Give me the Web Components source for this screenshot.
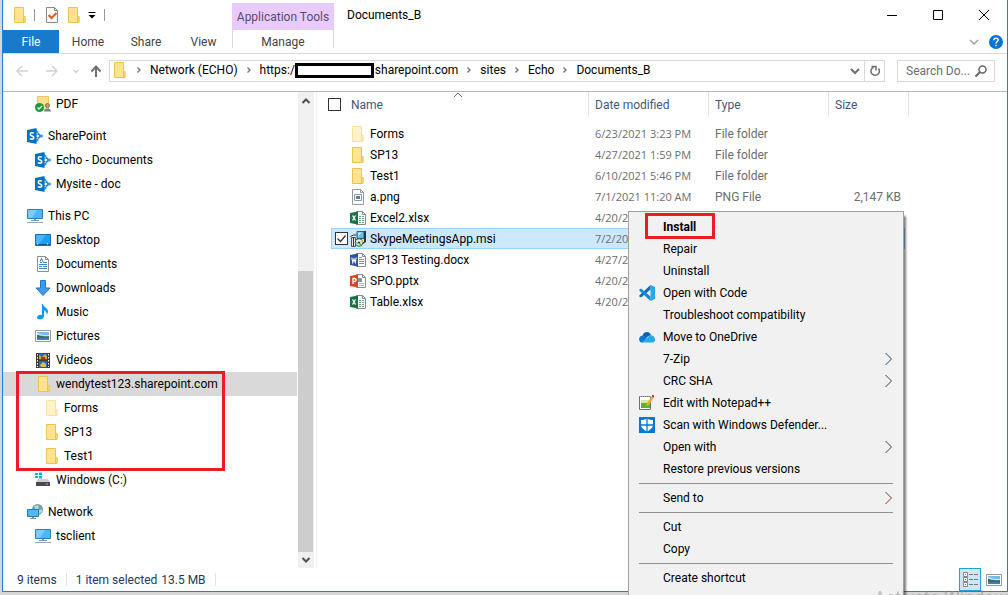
<!DOCTYPE html>
<html lang="en">
<head>
<meta charset="utf-8">
<title>Documents_B</title>
<style>
html, body { margin: 0; height: 100%; }
body { font: 12px/16px Roboto, "Open Sans", sans-serif; color: #000; background: #d6d6d6; overflow: hidden; }
</style>
</head>
<body>
<explorer-window></explorer-window>
<script>
const folder = (body, edge) => `<path d="M2.5.5h9v9h1.500v6h-10.500z" fill="${body}" stroke="${edge}"/><path d="M11.500 15V9.500h1.500V15z" fill="${body}" stroke="${edge}"/>`;
const office = (color, mark, detail) => `<path d="M6.500 1.500h6l3 3v10h-9z" fill="#fff" stroke="#8c8c8c"/><path d="M12.500 1.500v3h3" fill="none" stroke="#8c8c8c"/>${detail}<path d="M0 3l8-1.500v13L0 13z" fill="${color}"/>${mark}`;
const excel = office('#1e7145', '<path d="M2.500 5.500l3 5M5.500 5.500l-3 5" stroke="#fff" stroke-width="1.300"/>',
  '<path d="M9 6.500h2m1 0h2M9 8.500h2m1 0h2M9 10.500h2m1 0h2M9 12.500h2m1 0h2" stroke="#67a883"/>');
const monitor = '<path d="M.5 1.500h15v9H.5z" fill="#4cb8fb" stroke="#2f7eb0"/><path d="M1 2h9l-5 8H1z" fill="#7dcdfc"/><path d="M7 11h2v1h3v1H4v-1h3z" fill="#7d95a5"/><path d="M0 14h16v1H0z" fill="#8fa5b3"/>';
const ICONS = {
  folder: folder('#ffe391', '#ecc54c'),
  pale: folder('#fff2c8', '#f5e1a0'),
  sharepoint: '<path d="M9 3l5.500 5L9 13" fill="none" stroke="#0072c6"/><circle cx="10.500" cy="8" r="2" fill="#fff" stroke="#0072c6"/><path d="M9 1.500l3 2.500-3 1zM9 14.500l3-2.500-3-1z" fill="#3d94d6"/><circle cx="14.500" cy="8" r="1.500" fill="#3d94d6"/><path d="M0 2l9.500-2v16L0 14z" fill="#0072c6"/><path d="M6.800 5.200C5.600 4.400 3.300 4.500 3.300 6.200c0 2 3.500 1.500 3.500 3.500 0 1.800-2.500 2-4 1" fill="none" stroke="#fff" stroke-width="1.600"/>',
  pdf: '<path d="M2.500.500h11v13h-11z" fill="#ffe08a" stroke="#edc95c"/><circle cx="12.500" cy="9.500" r="2" fill="#c7a158" stroke="#77725c"/><path d="M9 15.500c0-4 7-4 7 0z" fill="#73819a"/><circle cx="4.500" cy="11.500" r="4.500" fill="#1a9a3b"/><path d="M2.500 11.500l1.500 1.500 3-3" fill="none" stroke="#fff" stroke-width="1.300"/>',
  monitor,
  desktop: '<path d="M.5 2.500h15v11H.500z" fill="#1da1f7" stroke="#1173b5"/><path d="M1 3h10L4 12H1z" fill="#48b5fb"/><path d="M1 12h14v1H1z" fill="#0a5a94"/><path d="M2 12h1m9 0h1" stroke="#fff"/>',
  document: '<path d="M2.500.500h8l3 3v12h-11z" fill="#fff" stroke="#8e8e8e"/><path d="M10.500.500v3h3" fill="none" stroke="#8e8e8e"/><path d="M5 6.500h2m1 0h4M4 8.500h8M4 10.500h3m1 0h4M4 12.500h8" stroke="#3f86bd"/><path d="M5 5.500l1.500-3L8 6" fill="none" stroke="#2c75b0"/>',
  download: '<path d="M5.500.500h5V8h4.500L8 15.500 1 8h4.500z" fill="#3d9be9" stroke="#2475c0"/>',
  music: '<path d="M7 0h1c0 3 5 3.500 5 7.500 0 1.500-.8 2.500-1.500 3C12 8 10 6.800 9 6.600V12c0 2-2 3.500-4 3.500S2 14.500 2 13.500 3.500 10.800 5.500 10.800c.6 0 1.100.1 1.500.3z" fill="#0a9cf5"/>',
  picture: '<path d="M.5 2.500h15v11H.500z" fill="#fff" stroke="#9a9a9a"/><path d="M2 4h12v4H2z" fill="#7db9e8"/><path d="M2 5l6 2 6 0v5H2z" fill="#cfe6f5"/><path d="M2 7c4 0 4 2 12 1v2H2z" fill="#396b5f"/><path d="M2 10h12v2H2z" fill="#3e7fc0"/>',
  video: '<path d="M1 1h14v15H1z" fill="#3b3b3b"/><path d="M4 1.500h8v6H4zM4 9h8v6.500H4z" fill="#2e65c8"/><path d="M4 3l3 2 3-3 2 2v3H4z" fill="#d3a640"/><path d="M6 5h4v2H6z" fill="#b0302a"/><path d="M5 13l3-3 3 2v3H6z" fill="#e3bc42"/><path d="M2.500 2v13m11-13v13" stroke="#fff" stroke-dasharray="1.500 1.500"/>',
  drive: '<path d="M0 1h3v2H0zM4 .5h3V3H4zM0 4h3v2H0zM4 4h3v2.500H4z" fill="#00b2f0"/><path d="M3 7h10l2 3H1z" fill="#cfcfcf"/><path d="M1 10h14v4H1z" fill="#4a4a4a"/><path d="M11 11.500h2v1h-2z" fill="#4eea4b"/>',
  network: '<circle cx="10.500" cy="5.500" r="5.500" fill="#6f9fb4"/><path d="M7 2l4-1 1 3-3 2zM12 6l3-1v3l-3 2z" fill="#b6d6c7"/><path d="M.500 5.500h11v7H.500z" fill="#50b9fb" stroke="#2779ad"/><path d="M5 13h2v1h2v1H3v-1h2z" fill="#7b93a3"/>',
  png: '<path d="M2.500.500h8l3 3v12h-11z" fill="#fff" stroke="#9a9a9a"/><path d="M10.500.500v3h3" fill="none" stroke="#9a9a9a"/><path d="M4.500 5.500h7v6h-7z" fill="#fff" stroke="#8a9aa6"/><path d="M6 7h4v3H6z" fill="#4b7fae"/>',
  excel,
  word: office('#2b579a', '<path d="M1.800 5.500l1 5L4 7l1.200 3.500 1-5" fill="none" stroke="#fff" stroke-width="1.100"/>', '<path d="M9 5.500h3M9 7.500h5M9 9.500h5M9 11.500h5" stroke="#8c8c8c"/>'),
  ppt: office('#d24726', '<path d="M3 11V5.500h1.500c2.200 0 2.200 3 0 3H3" fill="none" stroke="#fff" stroke-width="1.300"/>', '<path d="M8 5h4v4H8z" fill="#9a8d88"/><path d="M9 10.500h5M9 12.500h5" stroke="#e8a78f"/>'),
  msi: '<path d="M7 .5h7v7H7z" fill="#5bc3ea" stroke="#4c5560"/><path d="M8 1.500h4l-4 4z" fill="#bdeaf8"/><path d="M14 0h2v11l-3 2h-3v-2h4z" fill="#343434"/><path d="M1.500 6.500h4v9h-4z" fill="#e4e4e4" stroke="#555"/><path d="M.5 5.500l3-1.500 3 0M3.500 6v9" stroke="#333" fill="none"/><circle cx="9" cy="11.500" r="3.800" fill="#e6f3ee" stroke="#44584f"/><path d="M9 11.500L6.500 14l-1-3z" fill="#55c8d8"/><path d="M9 11.500l3 2-2 2z" fill="#33c23f"/><path d="M9 11.500l3-3 1 3z" fill="#eadb37"/><circle cx="9" cy="11.500" r="1" fill="#222"/>',
  props: '<path d="M2.500.500h8l3 3v12h-11z" fill="#fafafa" stroke="#8a8a8a"/><path d="M10.500.500v3h3" fill="none" stroke="#8a8a8a"/><path d="M4.500 8l3 3 5-5" fill="none" stroke="#e8581c" stroke-width="2"/>',
  vscode: '<path d="M11.500 0L16 2v12l-4.500 2z" fill="#23a9f2"/><path d="M11.500 0v4.500L2 12.500.300 11.500V10.500z" fill="#0f6fb3"/><path d="M11.500 16v-4.500L2 3.500.300 4.500v1z" fill="#1389d3"/>',
  onedrive: '<path d="M3.500 6.500C5 2 10.500 2 12 6l-6 3z" fill="#0f5fb5"/><path d="M3 13.500C-1 13-.800 7 3.500 6.500c2 0 3 1 4.500 2L4 13.500z" fill="#1475cf"/><path d="M3 13.300L9 8c2-3 6-1.500 6.500 1C17 11 15.500 13.500 13 13.500H3.500z" fill="#28a8ea"/>',
  notepad: '<path d="M.5 1.500h11v13H.500z" fill="#fff" stroke="#6e6e6e"/><path d="M2 5h8v2L8 9H2z" fill="#d6e8a0"/><path d="M2 8h9v5H2z" fill="#58b530"/><path d="M1 1.500h11" stroke="#a8a8a8" stroke-dasharray="1 1"/><path d="M7 11l1-3 5-7 2 1-5 8z" fill="#f0a63c"/><path d="M13 0l2 .5v2l-2-1z" fill="#a61f2e"/>',
  defender: '<path d="M0 0h16v16H0z" fill="#0078d7"/><path d="M8 1.500c2 1.500 4 1.500 6 1.500V8c0 3-3 5-6 6.500C5 13 2 11 2 8V3C4 3 6 3 8 1.500z" fill="#fff"/><path d="M8 1v14M1 8h14" stroke="#0078d7" stroke-width="1.300"/>',
  details: '<path d="M1.500.5h4v4h-4zM1.500 5.500h4v4h-4zM1.500 10.500h4v4h-4z" fill="#fff" stroke="#858585"/><path d="M3 2.500h1M3 7.500h1M3 12.500h1" stroke="#9c5d4c"/><path d="M7 2.500h4m1 0h4M7 7.500h4m1 0h4M7 12.500h4m1 0h4" stroke="#777"/>',
  back: '<path d="M14 8H3m5-5L3 8l5 5" fill="none" stroke="#d4d4d4" stroke-width="1.500"/>',
  forward: '<path d="M2 8h11M8 3l5 5-5 5" fill="none" stroke="#d4d4d4" stroke-width="1.500"/>',
  up: '<path d="M8 14V4M3.500 8.500L8 3.500l4.500 5" fill="none" stroke="#707070" stroke-width="2"/>',
  down: '<path d="M4 6l4 4 4-4" fill="none" stroke="#707070" stroke-width="2"/>',
  faint: '<path d="M5.500 7L8 9.500 10.500 7" fill="none" stroke="#ccc" stroke-width="1.200"/>',
  expand: '<path d="M4 6l4 4 4-4" fill="none" stroke="#9a9a9a" stroke-width="1.300"/>',
  crumb: '<path d="M6.500 5.500L9 8l-2.500 2.500" fill="none" stroke="#777" stroke-width="1.400"/>',
  qat: '<path d="M4.500 5.500h7" stroke="#000"/><path d="M4.500 8h7L8 11.500z" fill="#000"/>',
  refresh: '<path d="M11.500 5.500A4.200 4.200 0 1 1 6.500 4.200" fill="none" stroke="#707070" stroke-width="1.500"/><path d="M4.500 3.500h4.500v4" fill="none" stroke="#707070" stroke-width="1.500"/>',
  search: '<circle cx="9.500" cy="6.500" r="3.500" fill="none" stroke="#666" stroke-width="1.500"/><path d="M7 9l-4.500 4.500" stroke="#666" stroke-width="2"/>',
  min: '<path d="M3 8.500h10" stroke="#000"/>',
  max: '<path d="M3.500 3.500h9v9h-9z" fill="none" stroke="#000"/>',
  close: '<path d="M3 3l10 10M13 3L3 13" stroke="#000"/>',
  help: '<circle cx="8" cy="8" r="7" fill="#0a74d1"/><path d="M5.800 6.300c0-3 4.400-2.800 4.400-.3C10.200 7.500 8 7.800 8 9.500M8 10.800v1.500" fill="none" stroke="#fff" stroke-width="1.400"/>',
  scrollup: '<path d="M4.500 11L8 7.500l3.500 3.500" fill="none" stroke="#505050" stroke-width="2"/>',
  scrolldown: '<path d="M4.500 6L8 9.500 11.500 6" fill="none" stroke="#505050" stroke-width="2"/>',
  sort: '<path d="M4 10l4-4 4 4" fill="none" stroke="#6a6a6a"/>',
  more: '<path d="M4.500 2l6 6-6 6" fill="none" stroke="#2b4a68"/>',
  moreWarm: '<path d="M4.500 2l6 6-6 6" fill="none" stroke="#7c4024"/>'
};

function define(name, html, setup) {
  const template = document.createElement('template');
  template.innerHTML = `<style>:host,*,*::before,*::after{box-sizing:border-box}button{font:inherit;color:inherit;background:none;border:0;padding:0;margin:0;text-align:left}</style>${html}`;
  customElements.define(name, class extends HTMLElement {
    constructor() {
      super();
      this.attachShadow({ mode: 'open' }).append(template.content.cloneNode(true));
    }
    connectedCallback() { if (setup) setup(this, this.shadowRoot); }
  });
}

define('ui-icon', `<style>:host{display:block;flex:none;width:16px;height:16px}svg{display:block}</style><svg width="16" height="16" viewBox="0 0 16 16" aria-hidden="true"></svg>`,
  (el, root) => { root.querySelector('svg').innerHTML = ICONS[el.getAttribute('name')]; });

define('title-bar', `<style>
:host{display:flex;height:30px}
.quick{width:229px;display:flex;align-items:center;padding-left:9px}
.quick i{width:1px;height:12px;background:#999;margin:0 9px 0 6px}
.quick button{margin-right:6px}.quick .new{margin-right:2px}.quick .menu{margin-right:4px}.quick i.end{margin:0}
.context{width:102px;margin-top:3px;background:#e9cbfb;color:#5c4a72;text-align:center;line-height:28px;white-space:nowrap}
h1{flex:1;margin:0 0 0 13px;font:inherit;line-height:30px}
.controls{display:flex;align-items:center;gap:30px;padding-right:15px}
</style>
<div class="quick"><ui-icon name="folder"></ui-icon><i></i><button aria-label="Properties"><ui-icon name="props"></ui-icon></button><button class="new" aria-label="New folder"><ui-icon name="folder"></ui-icon></button><button class="menu" aria-label="Customize"><ui-icon name="qat"></ui-icon></button><i class="end"></i></div>
<div class="context">Application Tools</div><h1>Documents_B</h1>
<div class="controls"><button aria-label="Minimize"><ui-icon name="min"></ui-icon></button><button aria-label="Maximize"><ui-icon name="max"></ui-icon></button><button aria-label="Close"><ui-icon name="close"></ui-icon></button></div>`);

define('ribbon-tabs', `<style>
:host{display:flex;height:24px;border-bottom:1px solid #dadbdc;color:#444}
button{width:58px;text-align:center;line-height:24px}
.file{width:56px;background:#1979ca;color:#fff}
.view{width:57px}
.manage{width:102px;border:solid #dadbdc;border-width:0 1px;height:18px}
.right{margin-left:auto;display:flex;align-items:center;gap:6px;padding-right:3px}
.right button{width:auto}
</style><button class="file">File</button><button>Home</button><button>Share</button><button class="view">View</button><button class="manage">Manage</button>
<div class="right"><button aria-label="Expand ribbon"><ui-icon name="expand"></ui-icon></button><button aria-label="Help"><ui-icon name="help"></ui-icon></button></div>`);

define('address-bar', `<style>
:host{display:flex;height:38px;border-bottom:1px solid #b9b9b9;padding:6px 12px 0 11px}
.nav{display:flex;align-items:center;width:95px;height:22px}
.nav button:nth-child(1){margin-right:14px}.nav button:nth-child(2){margin-right:8px}.nav button:nth-child(3){margin-right:4px}
.path{flex:1;display:flex;align-items:center;height:22px;border:1px solid #d9d9d9;padding-left:2px;min-width:0}
.crumbs{display:flex;align-items:center;padding-bottom:2px}
.path a{color:#000;text-decoration:none;white-space:nowrap}
.sep{margin:0 3px}
.crumbs .host{display:flex;align-items:center}
.mask{display:block;width:79px;height:15px;border:3px solid #000;background:#fff;margin-right:1px}
.drop{margin-left:auto;padding:0 1px}
.reload{border-left:1px solid #d9d9d9;height:20px;width:20px;padding-left:2px}
label{display:flex;align-items:center;width:98px;height:22px;border:1px solid #d9d9d9;margin-left:12px;padding:0 5px 0 8px}
input{flex:1;min-width:0;border:0;padding:0;outline:0;background:none;font:inherit;color:#6d6d6d}
input::placeholder{color:#6d6d6d;opacity:1}
</style>
<div class="nav"><button aria-label="Back"><ui-icon name="back"></ui-icon></button><button aria-label="Forward"><ui-icon name="forward"></ui-icon></button><button aria-label="Recent"><ui-icon name="faint"></ui-icon></button><button aria-label="Up"><ui-icon name="up"></ui-icon></button></div>
<div class="path"><div class="crumbs"><ui-icon name="folder"></ui-icon><ui-icon class="sep" name="crumb"></ui-icon><a href="#">Network (ECHO)</a><ui-icon class="sep" name="crumb"></ui-icon><a class="host" href="#">https:/<span class="mask"></span>sharepoint.com</a><ui-icon class="sep" name="crumb"></ui-icon><a href="#">sites</a><ui-icon class="sep" name="crumb"></ui-icon><a href="#">Echo</a><ui-icon class="sep" name="crumb"></ui-icon><a href="#">Documents_B</a></div>
<button class="drop" aria-label="History"><ui-icon name="down"></ui-icon></button><button class="reload" aria-label="Refresh"><ui-icon name="refresh"></ui-icon></button></div>
<label><input type="text" aria-label="Search Documents_B" placeholder="Search Do..."><ui-icon name="search"></ui-icon></label>`);

define('tree-item', `<style>
:host{display:flex;align-items:center;gap:5px;height:24px;padding-left:24px;white-space:nowrap}
:host([level="2"]){padding-left:32px}:host([level="3"]){padding-left:40px}
:host([icon="folder"]),:host([icon="pale"]){gap:4px}
:host([level="2"][icon="folder"]){padding-left:33px}
:host([level="3"]){padding-left:41px}
:host([selected]){background:#d9d9d9}
:host([first]){margin-top:8px}
</style><ui-icon></ui-icon><slot></slot>`, (el, root) => {
  const icon = document.createElement('ui-icon');
  icon.setAttribute('name', el.getAttribute('icon'));
  root.querySelector('ui-icon').replaceWith(icon);
});

define('folder-tree', `<style>
:host{display:flex;width:314px;flex:none;border-right:1px solid #f0f0f0}
nav{flex:1}
.marked{position:relative}
.marked::after{content:"";position:absolute;left:13px;top:-1px;width:209px;bottom:-3px;border:3px solid #ed1c24}
.scroll{display:flex;flex-direction:column;width:16px;margin:0 2px 0 1px;background:#f0f0f0}
.thumb{margin-top:auto;width:15px;height:59%;background:#cdcdcd}
</style>
<nav aria-label="Folders">
<tree-item level="2" icon="pdf">PDF</tree-item>
<tree-item first icon="sharepoint">SharePoint</tree-item>
<tree-item level="2" icon="sharepoint">Echo - Documents</tree-item>
<tree-item level="2" icon="sharepoint">Mysite - doc</tree-item>
<tree-item first icon="monitor">This PC</tree-item>
<tree-item level="2" icon="desktop">Desktop</tree-item>
<tree-item level="2" icon="document">Documents</tree-item>
<tree-item level="2" icon="download">Downloads</tree-item>
<tree-item level="2" icon="music">Music</tree-item>
<tree-item level="2" icon="picture">Pictures</tree-item>
<tree-item level="2" icon="video">Videos</tree-item>
<div class="marked">
<tree-item level="2" icon="folder" selected>wendytest123.sharepoint.com</tree-item>
<tree-item level="3" icon="pale">Forms</tree-item>
<tree-item level="3" icon="folder">SP13</tree-item>
<tree-item level="3" icon="folder">Test1</tree-item>
</div>
<tree-item level="2" icon="drive">Windows (C:)</tree-item>
<tree-item first icon="network">Network</tree-item>
<tree-item level="2" icon="monitor">tsclient</tree-item>
</nav>
<div class="scroll"><ui-icon name="scrollup"></ui-icon><div class="thumb"></div><ui-icon name="scrolldown"></ui-icon></div>`);

define('file-list', `<style>
:host{display:block;flex:1;min-width:0;padding-left:8px}
table{border-collapse:separate;border-spacing:0;table-layout:fixed;width:584px}
col.pick{width:25px}col.name{width:239px}col.date{width:120px}col.type{width:120px}col.size{width:80px}
th{height:25px;padding:0 6px;font-weight:400;text-align:left;color:#43567d;border-right:1px solid #e4e4e4;position:relative}
th.pick{border:0;padding:0 0 0 3px}th.name{padding-left:1px}
.sort{position:absolute;left:100px;top:-5px}
thead::after{content:"";display:block;height:6px}
td{height:21px;padding:0 6px;color:#6d6d6d;white-space:nowrap;overflow:hidden;background-clip:padding-box}
td.pick{border-left:6px solid transparent;padding:0 0 0 4px}
td.name{padding:0;color:#000}
td.name div{display:flex;align-items:center;gap:4px}
td.date{font:11px/16px "Open Sans",sans-serif}
td.size{text-align:right;border-right:4px solid transparent;padding-right:4px}
tr.on td{background-color:#cce8ff;box-shadow:inset 0 1px #99d1ff,inset 0 -1px #99d1ff}
tr.on td.pick{box-shadow:inset 0 1px #99d1ff,inset 0 -1px #99d1ff,inset 1px 0 #99d1ff}
tr.on td.size{box-shadow:inset 0 1px #99d1ff,inset 0 -1px #99d1ff,inset -1px 0 #99d1ff}
input{appearance:none;display:block;margin:0;width:13px;height:13px;border:1px solid #333;background:#fff}
input:checked{background:#fff url("data:image/svg+xml,%3Csvg xmlns='http://www.w3.org/2000/svg' viewBox='0 0 11 11'%3E%3Cpath d='M1.500 5.500l3 3 5-6' fill='none' stroke='%23333' stroke-width='1.300'/%3E%3C/svg%3E")}
</style>
<table><colgroup><col class="pick"><col class="name"><col class="date"><col class="type"><col class="size"></colgroup>
<thead><tr><th class="pick"><input type="checkbox" aria-label="Select all"></th><th class="name">Name<ui-icon class="sort" name="sort"></ui-icon></th><th>Date modified</th><th>Type</th><th>Size</th></tr></thead><tbody></tbody></table>`,
(el, root) => {
  const files = [
    ['pale', 'Forms', '6/23/2021 3:23 PM', 'File folder', ''],
    ['folder', 'SP13', '4/27/2021 1:59 PM', 'File folder', ''],
    ['folder', 'Test1', '6/10/2021 5:46 PM', 'File folder', ''],
    ['png', 'a.png', '7/1/2021 11:20 AM', 'PNG File', '2,147 KB'],
    ['excel', 'Excel2.xlsx', '4/20/2', '', ''],
    ['msi', 'SkypeMeetingsApp.msi', '7/2/20', '', ''],
    ['word', 'SP13 Testing.docx', '4/27/2', '', ''],
    ['ppt', 'SPO.pptx', '4/20/2', '', ''],
    ['excel', 'Table.xlsx', '4/20/2', '', '']
  ];
  root.querySelector('tbody').innerHTML = files.map(([icon, name, date, type, size]) => {
    const on = icon === 'msi';
    return `<tr${on ? ' class="on"' : ''}><td class="pick">${on ? `<input type="checkbox" checked aria-label="${name}">` : ''}</td><td class="name"><div><ui-icon name="${icon}"></ui-icon>${name}</div></td><td class="date">${date}</td><td>${type}</td><td class="size">${size}</td></tr>`;
  }).join('');
});

define('status-bar', `<style>
:host{display:flex;align-items:center;height:23px;padding:0 5px 0 14px;color:#1e395b}
span{white-space:nowrap}
span+span{margin-left:4px}
i{width:1px;height:13px;background:#e3e3e3;margin:0 9px}
.views{margin-left:auto;display:flex;align-items:center;gap:3px;height:23px}
.views button{padding:3px 2px;width:22px;height:23px;border:1px solid transparent}
.views .on{background:#cce8f6;border-color:#26a0da}
.views button:last-child{padding-left:1px;width:18px}
</style><span>9 items</span><i></i><span>1 item selected</span><span>13.5 MB</span><i></i>
<div class="views"><button class="on" aria-label="Details"><ui-icon name="details"></ui-icon></button><button aria-label="Thumbnails"><ui-icon name="picture"></ui-icon></button></div>`);

define('menu-item', `<style>
:host{display:block}
button{display:flex;align-items:center;width:100%;height:22px;padding:0 6px 0 10px;white-space:nowrap}
.icon{width:24px;flex:none}
.label{flex:1;position:relative}
:host([strong]) .label{font-weight:700}
:host([strong]) .label::after{content:"";position:absolute;left:-18px;top:-6px;width:70px;height:26px;border:3px solid #ed1c24}
</style><button role="menuitem"><span class="icon"></span><span class="label"><slot></slot></span></button>`, (el, root) => {
  const name = el.getAttribute('icon');
  if (name) root.querySelector('.icon').innerHTML = `<ui-icon name="${name}"></ui-icon>`;
  if (el.hasAttribute('submenu')) root.querySelector('button').insertAdjacentHTML('beforeend', `<ui-icon name="${el.getAttribute('submenu') || 'more'}"></ui-icon>`);
});

define('context-menu', `<style>
:host{display:block;width:276px;padding:4px 0 26px;background:#f1f1f1;border:1px solid #a0a0a0;box-shadow:3px 4px 2px -1px rgba(0,0,0,.5)}
hr{margin:3px 10px;border:0;height:1px;background:#919191}
</style>
<menu-item strong>Install</menu-item>
<menu-item>Repair</menu-item>
<menu-item>Uninstall</menu-item>
<menu-item icon="vscode">Open with Code</menu-item>
<menu-item>Troubleshoot compatibility</menu-item>
<menu-item icon="onedrive">Move to OneDrive</menu-item>
<menu-item submenu>7-Zip</menu-item>
<menu-item submenu>CRC SHA</menu-item>
<menu-item icon="notepad">Edit with Notepad++</menu-item>
<menu-item icon="defender">Scan with Windows Defender...</menu-item>
<menu-item submenu>Open with</menu-item>
<menu-item>Restore previous versions</menu-item>
<hr><menu-item submenu="moreWarm">Send to</menu-item>
<hr><menu-item>Cut</menu-item>
<menu-item>Copy</menu-item>
<hr><menu-item>Create shortcut</menu-item>`);

define('explorer-window', `<style>
:host{display:flex;flex-direction:column;height:100vh;padding:0 0 3px 2px;position:relative;overflow:hidden}
.window{flex:1;display:flex;flex-direction:column;min-height:0;background:#fff;border:1px solid #1883d7;border-top:0}
main{flex:1;display:flex;min-height:0}
context-menu{position:absolute;left:628px;top:211px}
.watermark{position:absolute;right:0;bottom:-14px;width:134px;font-size:18px;line-height:22px;color:rgba(140,140,140,.55);white-space:nowrap;pointer-events:none}
</style>
<div class="window"><title-bar></title-bar><ribbon-tabs></ribbon-tabs><address-bar></address-bar>
<main><folder-tree></folder-tree><file-list></file-list></main><status-bar></status-bar></div>
<context-menu></context-menu>
<div class="watermark">Activate Windows</div>`);
</script>
</body>
</html>
